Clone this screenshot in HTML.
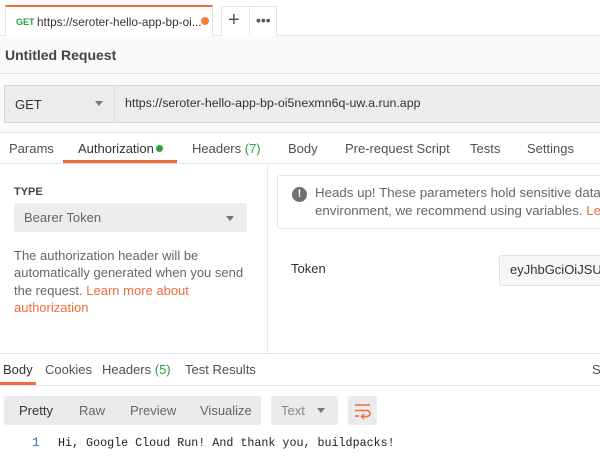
<!DOCTYPE html>
<html><head><meta charset="utf-8"><style>
*{margin:0;padding:0;box-sizing:border-box}
html,body{width:600px;height:469px;overflow:hidden}
body{background:#fff;font-family:"Liberation Sans",sans-serif;font-size:13px;color:#505050;position:relative}
.a{position:absolute;white-space:nowrap}
.o{color:#f26b3a}.g{color:#26a244}
</style></head><body>
<div class="a" style="left:0;top:35px;width:600px;height:1px;background:#e4e4e4"></div>
<div class="a" style="left:5px;top:5px;width:208px;height:31px;background:#fff;border-top:2px solid #f26b3a;border-left:1px solid #e4e4e4;border-right:1px solid #e4e4e4"></div>
<div class="a" style="left:16px;top:17px;font-size:9px;font-weight:bold;color:#26a244">GET</div>
<div class="a" style="left:37px;top:15px;font-size:11.8px;color:#333">https://seroter-hello-app-bp-oi...</div>
<div class="a" style="left:201px;top:17px;width:8px;height:8px;border-radius:50%;background:#f2803a"></div>
<div class="a" style="left:221px;top:6px;width:56px;height:30px;border:1px solid #e4e4e4;border-bottom:none;background:#fff"></div>
<div class="a" style="left:249px;top:6px;width:1px;height:29px;background:#e4e4e4"></div>
<div class="a" style="left:228px;top:9px;font-size:20px;color:#555">+</div>
<div class="a" style="left:256px;top:12px;font-size:14px;color:#555">•••</div>
<div class="a" style="left:0;top:36px;width:600px;height:38px;background:#fafafa;border-bottom:1px solid #e4e4e4"></div>
<div class="a" style="left:5px;top:47px;font-size:14px;font-weight:bold;color:#444">Untitled Request</div>
<div class="a" style="left:0;top:74px;width:600px;height:58px;background:#fafafa"></div>
<div class="a" style="left:4px;top:85px;width:596px;height:38px;background:#ececec;border:1px solid #d8d8d8;border-right:none"></div>
<div class="a" style="left:114px;top:86px;width:1px;height:36px;background:#d8d8d8"></div>
<div class="a" style="left:15px;top:97px;font-size:13px;color:#333">GET</div>
<div class="a" style="left:95px;top:101px;width:0;height:0;border-left:4px solid transparent;border-right:4px solid transparent;border-top:5px solid #777"></div>
<div class="a" style="left:125px;top:96px;font-size:12.4px;color:#333">https://seroter-hello-app-bp-oi5nexmn6q-uw.a.run.app</div>
<div class="a" style="left:0;top:132px;width:600px;height:1px;background:#e8e8e8"></div>
<div class="a" style="left:0;top:163px;width:600px;height:1px;background:#e4e4e4"></div>
<div class="a" style="left:63px;top:160px;width:114px;height:3px;background:#f26b3a"></div>
<div class="a" style="left:9px;top:141px">Params</div>
<div class="a" style="left:78px;top:141px;color:#333">Authorization</div>
<div class="a" style="left:156px;top:145px;width:7px;height:7px;border-radius:50%;background:#26a244"></div>
<div class="a" style="left:192px;top:141px">Headers <span class="g">(7)</span></div>
<div class="a" style="left:288px;top:141px">Body</div>
<div class="a" style="left:345px;top:141px">Pre-request Script</div>
<div class="a" style="left:470px;top:141px">Tests</div>
<div class="a" style="left:527px;top:141px">Settings</div>
<div class="a" style="left:267px;top:164px;width:1px;height:189px;background:#e8e8e8"></div>
<div class="a" style="left:14px;top:186px;font-size:11px;font-weight:bold;color:#444">TYPE</div>
<div class="a" style="left:14px;top:203px;width:233px;height:29px;background:#ededed;border-radius:3px"></div>
<div class="a" style="left:24px;top:210px;color:#666">Bearer Token</div>
<div class="a" style="left:226px;top:216px;width:0;height:0;border-left:4px solid transparent;border-right:4px solid transparent;border-top:5px solid #777"></div>
<div class="a" style="left:14px;top:247px;line-height:17.3px;white-space:normal;width:240px;color:#666;font-size:13px">The authorization header will be automatically generated when you send the request. <span class="o">Learn more about authorization</span></div>
<div class="a" style="left:277px;top:175px;width:323px;height:54px;border:1px solid #e4e4e4;border-right:none;border-radius:3px 0 0 3px"></div>
<div class="a" style="left:292px;top:187px;width:15px;height:15px;border-radius:50%;background:#707070;color:#fff;font-size:11px;font-weight:bold;text-align:center;line-height:15px">!</div>
<div class="a" style="left:315px;top:185px;color:#666;font-size:13.3px">Heads up! These parameters hold sensitive data</div>
<div class="a" style="left:315px;top:203px;color:#666;font-size:13.3px">environment, we recommend using variables. <span class="o">Lea</span></div>
<div class="a" style="left:291px;top:261px;color:#333">Token</div>
<div class="a" style="left:499px;top:255px;width:101px;height:31px;background:#f6f6f6;border:1px solid #e0e0e0;border-right:none;border-radius:3px 0 0 3px"></div>
<div class="a" style="left:510px;top:262px;color:#333">eyJhbGciOiJSU</div>
<div class="a" style="left:0;top:353px;width:600px;height:1px;background:#e4e4e4"></div>
<div class="a" style="left:0;top:385px;width:600px;height:1px;background:#e8e8e8"></div>
<div class="a" style="left:0;top:382px;width:36px;height:3px;background:#f26b3a"></div>
<div class="a" style="left:3px;top:362px;color:#333">Body</div>
<div class="a" style="left:45px;top:362px">Cookies</div>
<div class="a" style="left:102px;top:362px">Headers <span class="g">(5)</span></div>
<div class="a" style="left:185px;top:362px">Test Results</div>
<div class="a" style="left:592px;top:362px">S</div>
<div class="a" style="left:4px;top:396px;width:257px;height:29px;background:#ebebeb;border-radius:3px"></div>
<div class="a" style="left:19px;top:403px;color:#333">Pretty</div>
<div class="a" style="left:79px;top:403px;color:#666">Raw</div>
<div class="a" style="left:130px;top:403px;color:#666">Preview</div>
<div class="a" style="left:200px;top:403px;color:#666">Visualize</div>
<div class="a" style="left:271px;top:396px;width:67px;height:29px;background:#ebebeb;border-radius:3px"></div>
<div class="a" style="left:281px;top:403px;color:#888">Text</div>
<div class="a" style="left:317px;top:408px;width:0;height:0;border-left:4px solid transparent;border-right:4px solid transparent;border-top:5px solid #777"></div>
<div class="a" style="left:348px;top:396px;width:29px;height:29px;background:#ebebeb;border-radius:3px"></div>
<svg class="a" style="left:353px;top:401px" width="19" height="19" viewBox="0 0 19 19" fill="none" stroke="#f26b3a" stroke-width="1.6">
<path d="M2 4h15M2 9.5h12a3 3 0 0 1 0 6H9"/><path d="M11 13l-2.5 2.5L11 18" stroke-width="1.4"/><path d="M2 15h4"/></svg>
<div class="a" style="left:32px;top:435px;color:#2a7ab0;font-family:'Liberation Mono',monospace">1</div>
<div class="a" style="left:58px;top:436px;color:#222;font-family:'Liberation Mono',monospace;font-size:11.7px">Hi, Google Cloud Run! And thank you, buildpacks!</div>
</body></html>
